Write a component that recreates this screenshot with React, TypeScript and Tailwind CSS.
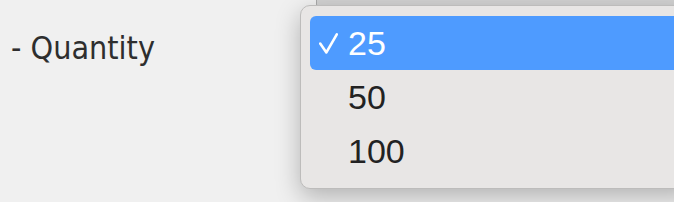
import React from "react";

const items = [
  { label: "25", selected: true },
  { label: "50", selected: false },
  { label: "100", selected: false },
];

export default function App() {
  return (
    <div className="relative h-[202px] w-[674px] overflow-hidden bg-[#f0f0f0]">
      <div className="flex h-full items-start">
        <div
          className="mt-[30px] pl-[11px] text-[32px] leading-[36px] text-[#2e2e2e]"
          style={{ fontFamily: '"DejaVu Sans Condensed", "DejaVu Sans", sans-serif' }}
        >
          - Quantity
        </div>
      </div>

      {/* underlying select control, mostly covered by the open menu */}
      <div className="absolute left-[316px] right-[-10px] top-[-30px] h-[40px] rounded-[6px] border border-[#a9a9a9] bg-[#d2d2d2]" />

      {/* open popup menu */}
      <div
        className="absolute left-[300px] right-[-20px] top-[5px] rounded-[10px] border border-[#bdbcbb] bg-[#e8e6e5] px-[9px] pt-[10px] pb-[10px] shadow-[0_8px_24px_rgba(0,0,0,0.26)]"
        style={{ fontFamily: '"Liberation Sans", Arial, sans-serif' }}
      >
        {items.map((it) => (
          <div
            key={it.label}
            className={
              it.selected
                ? "flex h-[54px] items-center rounded-[6px] bg-[#4e9bff] text-white"
                : "flex h-[54px] items-center rounded-[6px] text-[#222222]"
            }
          >
            <div className="flex w-[38px] shrink-0 items-center pl-[9px]">
              {it.selected ? (
                <svg width="19" height="21" viewBox="0 0 19 21" fill="none">
                  <path
                    d="M1.2 10.5 L7.4 19.4 L17.8 1.4"
                    stroke="white"
                    strokeWidth="2.6"
                    strokeLinecap="round"
                    strokeLinejoin="round"
                  />
                </svg>
              ) : null}
            </div>
            <span className="text-[34px] leading-none">{it.label}</span>
          </div>
        ))}
      </div>
    </div>
  );
}
